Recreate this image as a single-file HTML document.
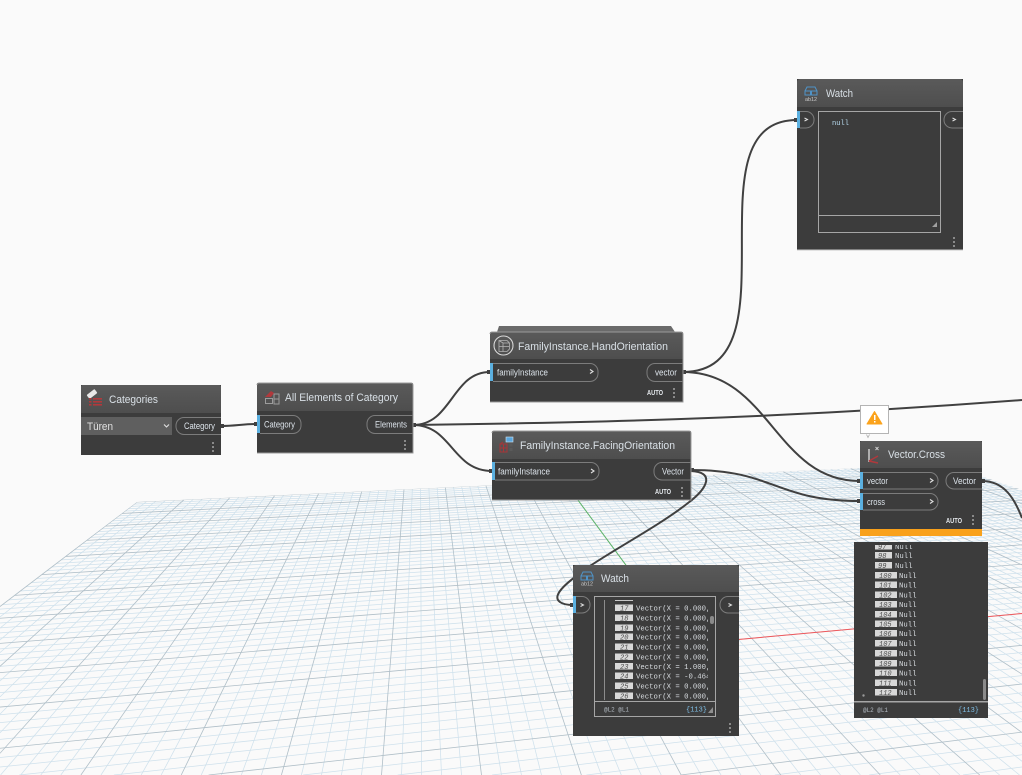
<!DOCTYPE html>
<html>
<head>
<meta charset="utf-8">
<title>Dynamo graph</title>
<style>
html,body{margin:0;padding:0;background:#fafafa;width:1022px;height:775px;overflow:hidden}
svg{display:block}
text{font-family:"Liberation Sans",sans-serif;fill:#d9e0e6}
.t{font-size:11px}
.p{font-size:9px;fill:#dce3ea}
.a{font-size:7.5px;font-weight:bold;fill:#e4e8ec}
.m{font-family:"Liberation Mono",monospace;font-size:7.3px;fill:#d9dde1}
.l{font-family:"Liberation Mono",monospace;font-size:7px;font-style:italic;fill:#4d4d4d}
.g{font-family:"Liberation Mono",monospace;font-size:6.8px;fill:#b4bcc4}
.b{font-family:"Liberation Mono",monospace;font-size:7.3px;fill:#7fc0e8}
.pill{fill:none;stroke:#7c7c7c;stroke-width:1}
.body{fill:#3c3c3c}
.bar{fill:#5bb0e0}
.hd{fill:url(#hg)}
.w{fill:none;stroke:#404040;stroke-width:2}
.dot{fill:#8a8a8a}
.lb{fill:#d8d8d8}
.box{fill:none;stroke:#a6a6a6;stroke-width:1}
.edge{fill:none;stroke:#9a9a9a;stroke-width:1}
</style>
</head>
<body>
<svg xmlns="http://www.w3.org/2000/svg" width="1022" height="775" viewBox="0 0 1022 775">
<defs>
<linearGradient id="hg" x1="0" y1="0" x2="0" y2="1"><stop offset="0" stop-color="#5a5a5a"/><stop offset="1" stop-color="#4e4e4e"/></linearGradient>
<clipPath id="gc"><path d="M137 502L945 464L1022 490L1022 775L0 775L0 605Z"/></clipPath>
<clipPath id="c1"><rect x="595" y="601" width="113" height="100"/></clipPath>
<clipPath id="c2"><rect x="854" y="545" width="134" height="156"/></clipPath>
</defs>
<rect width="1022" height="775" fill="#fafafa"/>
<g id="grid" clip-path="url(#gc)"></g>

<!-- wires -->
<path class="w" d="M221 426C235 426 243 424 257 424"/>
<path class="w" d="M413 425C452 425 452 372 490 372"/>
<path class="w" d="M413 425C452 425 452 471 492 471"/>
<path class="w" d="M413 425C560 423 760 420 1022 400"/>
<path class="w" d="M683 372C800 372 685 120 797 120"/>
<path class="w" d="M683 372C770 372 775 481 860 481"/>
<path class="w" d="M691 470C775 470 775 501 860 501"/>
<path class="w" d="M691 471C715 472 708 488 688 503C660 525 620 546 590 566C570 580 550 595 560 602C564 605 570 605 573 605"/>
<path class="w" d="M982 481C1005 481 1015 500 1022 518"/>
<g fill="#404040">
<rect x="221" y="424" width="3" height="4"/><rect x="254" y="422" width="3" height="4"/>
<rect x="413" y="423" width="3" height="4"/><rect x="487" y="370" width="3" height="4"/>
<rect x="489" y="469" width="3" height="4"/><rect x="683" y="370" width="3" height="4"/>
<rect x="794" y="118" width="3" height="4"/><rect x="691" y="468" width="3" height="4"/>
<rect x="857" y="479" width="3" height="4"/><rect x="857" y="499" width="3" height="4"/>
<rect x="982" y="479" width="3" height="4"/><rect x="570" y="603" width="3" height="4"/>
</g>

<!-- Categories -->
<rect class="body" x="81" y="385" width="140" height="70"/>
<path class="hd" d="M81 413V387a2 2 0 0 1 2-2H219a2 2 0 0 1 2 2V413Z"/>
<g transform="translate(92 394) rotate(-38)"><rect x="-5" y="-2.5" width="10" height="5" rx="1" fill="#e8e8e8"/></g>
<g fill="#b0393c"><rect x="93" y="398" width="9" height="1.6"/><rect x="93" y="401" width="9" height="1.6"/><rect x="93" y="404" width="9" height="1.6"/><rect x="89" y="398" width="2.5" height="1.6"/><rect x="89" y="401" width="2.5" height="1.6"/><rect x="89" y="404" width="2.5" height="1.6"/></g>
<text class="t" x="109" y="403" textLength="49" lengthAdjust="spacingAndGlyphs">Categories</text>
<rect x="81" y="417" width="91" height="18" fill="#5f5f5f"/>
<text class="t" x="87" y="430" textLength="26" lengthAdjust="spacingAndGlyphs" style="fill:#e2e2e2">Türen</text>
<path d="M164 424.5l2.5 2.5l2.5-2.5" fill="none" stroke="#e0e0e0" stroke-width="1.1"/>
<path class="pill" d="M221 417.5H184a8 8 0 0 0-8 8v1a8 8 0 0 0 8 8H221"/>
<text class="p" x="184" y="429" textLength="31" lengthAdjust="spacingAndGlyphs">Category</text>
<g class="dot"><rect x="212" y="442" width="2" height="2"/><rect x="212" y="446" width="2" height="2"/><rect x="212" y="450" width="2" height="2"/></g>

<!-- All Elements -->
<rect class="body" x="257" y="383" width="156" height="70"/>
<path class="hd" d="M257 411V385a2 2 0 0 1 2-2H411a2 2 0 0 1 2 2V411Z"/>
<path class="edge" d="M257 453H413V385a2 2 0 0 0-2-2H259a2 2 0 0 0-2 2"/>
<path d="M265 397l6-6l3 2l-3 4z" fill="#b0393c"/>
<rect x="265.500" y="398.500" width="7" height="5" fill="none" stroke="#9c9c9c"/>
<rect x="274" y="394" width="5" height="10" fill="none" stroke="#9c9c9c"/>
<line x1="274" y1="399" x2="279" y2="399" stroke="#9c9c9c"/>
<text class="t" x="285" y="401" textLength="113" lengthAdjust="spacingAndGlyphs">All Elements of Category</text>
<rect class="bar" x="257" y="415" width="3" height="18"/>
<path class="pill" d="M260 415.5H293a8 8 0 0 1 8 8v2a8 8 0 0 1-8 8H260"/>
<text class="p" x="264" y="427.5" textLength="31" lengthAdjust="spacingAndGlyphs">Category</text>
<path class="pill" d="M413 415.5H375a8 8 0 0 0-8 8v2a8 8 0 0 0 8 8H413"/>
<text class="p" x="375" y="427.5" textLength="32" lengthAdjust="spacingAndGlyphs">Elements</text>
<g class="dot"><rect x="404" y="440" width="2" height="2"/><rect x="404" y="444" width="2" height="2"/><rect x="404" y="448" width="2" height="2"/></g>

<!-- HandOrientation -->
<path d="M497 332L499 326H671L675 332Z" fill="#6a6a6a"/>
<rect class="body" x="490" y="332" width="193" height="70"/>
<path class="hd" d="M490 359V334a2 2 0 0 1 2-2H681a2 2 0 0 1 2 2V359Z"/>
<path class="edge" d="M490 402H683V334a2 2 0 0 0-2-2H492a2 2 0 0 0-2 2"/>
<circle cx="503.500" cy="345.500" r="9.500" fill="none" stroke="#d8d8d8" stroke-width="1.100"/>
<path d="M499 340.500h8l2.500 2.500v6l-2.500 2.500h-8zM499 340.500l4 2.500v8.500M503 343h6.500M499 346.500h10" fill="none" stroke="#b4b4b4" stroke-width=".8"/>
<text class="t" x="518" y="350" textLength="150" lengthAdjust="spacingAndGlyphs">FamilyInstance.HandOrientation</text>
<rect class="bar" x="490" y="363" width="3" height="18"/>
<path class="pill" d="M493 363.500H590a8 8 0 0 1 8 8v2a8 8 0 0 1-8 8H493"/>
<text class="p" x="497" y="375.500" textLength="51" lengthAdjust="spacingAndGlyphs">familyInstance</text>
<path d="M590 369.500l3 2l-3 2" fill="none" stroke="#e0e0e0" stroke-width="1.100"/>
<path class="pill" d="M683 363.500H655a8 8 0 0 0-8 8v2a8 8 0 0 0 8 8H683"/>
<text class="p" x="655" y="375.500" textLength="22" lengthAdjust="spacingAndGlyphs">vector</text>
<text class="a" x="647" y="395" textLength="16" lengthAdjust="spacingAndGlyphs">AUTO</text>
<g class="dot"><rect x="673" y="388" width="2" height="2"/><rect x="673" y="392" width="2" height="2"/><rect x="673" y="396" width="2" height="2"/></g>

<!-- FacingOrientation -->
<rect class="body" x="492" y="431" width="199" height="69"/>
<path class="hd" d="M492 459V433a2 2 0 0 1 2-2H689a2 2 0 0 1 2 2V459Z"/>
<path class="edge" d="M492 500H691V433a2 2 0 0 0-2-2H494a2 2 0 0 0-2 2"/>
<rect x="506" y="437" width="7" height="5" fill="#5aa5dc" stroke="#cfe3f0" stroke-width=".6"/>
<rect x="509.500" y="443.500" width="3" height="3" fill="#5a5a5a"/><rect x="509.500" y="448" width="3" height="3" fill="#5a5a5a"/>
<path d="M500 444h7v8h-7zM500 448h7M503.500 444v8M503 442l-3 2" fill="none" stroke="#a83538" stroke-width="1"/>
<text class="t" x="520" y="449" textLength="155" lengthAdjust="spacingAndGlyphs">FamilyInstance.FacingOrientation</text>
<rect class="bar" x="492" y="462" width="3" height="18"/>
<path class="pill" d="M495 462.500H591a8 8 0 0 1 8 8v1.500a8 8 0 0 1-8 8H495"/>
<text class="p" x="498" y="474.500" textLength="52" lengthAdjust="spacingAndGlyphs">familyInstance</text>
<path d="M591 469l3 2l-3 2" fill="none" stroke="#e0e0e0" stroke-width="1.100"/>
<path class="pill" d="M691 462.500H662a8 8 0 0 0-8 8v1.500a8 8 0 0 0 8 8H691"/>
<text class="p" x="662" y="474.500" textLength="22" lengthAdjust="spacingAndGlyphs">Vector</text>
<text class="a" x="655" y="494" textLength="16" lengthAdjust="spacingAndGlyphs">AUTO</text>
<g class="dot"><rect x="681" y="487" width="2" height="2"/><rect x="681" y="491" width="2" height="2"/><rect x="681" y="495" width="2" height="2"/></g>

<!-- Watch top -->
<rect class="body" x="797" y="79" width="166" height="171"/>
<path class="hd" d="M797 107V82a3 3 0 0 1 3-3H960a3 3 0 0 1 3 3V107Z"/>
<line x1="797" y1="250" x2="963" y2="250" stroke="#c8c8c8"/>
<g fill="none" stroke="#4f93c7" stroke-width="1">
<path d="M805 91l2-4h8l2 4M805 91h5.500v4h-5.500zM811.500 91h5.500v4h-5.500zM810.500 92h1"/>
</g>
<text x="805" y="101" style="font-size:5.500px;fill:#c8c8c8" textLength="12" lengthAdjust="spacingAndGlyphs">ab12</text>
<text class="t" x="826" y="97" textLength="27" lengthAdjust="spacingAndGlyphs">Watch</text>
<rect class="bar" x="797" y="111" width="3" height="17"/>
<path class="pill" d="M800 111.500H806a8 8 0 0 1 8 8v.5a8 8 0 0 1-8 8H800"/>
<path d="M804.500 118l3 1.500l-3 1.500" fill="none" stroke="#e0e0e0"/>
<path class="pill" d="M963 111.500H952a8 8 0 0 0-8 8v.5a8 8 0 0 0 8 8H963"/>
<path d="M952.500 118l3 1.500l-3 1.500" fill="none" stroke="#e0e0e0"/>
<rect class="box" x="818.500" y="111.500" width="122" height="121"/>
<line x1="818" y1="215.500" x2="941" y2="215.500" stroke="#a6a6a6"/>
<path d="M937 222v5h-5z" fill="#a0a0a0"/>
<text class="b" x="832" y="125" textLength="17" lengthAdjust="spacingAndGlyphs" style="fill:#b8dcf0">null</text>
<g class="dot"><rect x="953" y="237" width="2" height="2"/><rect x="953" y="241" width="2" height="2"/><rect x="953" y="245" width="2" height="2"/></g>

<!-- Warning -->
<rect x="860.500" y="405.500" width="28" height="28" fill="#fff" stroke="#b4b4b4"/>
<path d="M874.500 411.500L882 424H867Z" fill="#fba31c" stroke="#fba31c" stroke-linejoin="round"/>
<rect x="874" y="415" width="1.500" height="5" fill="#fff"/><rect x="874" y="421" width="1.500" height="1.500" fill="#fff"/>
<path d="M866.500 434.500l1.500 3l1.500-3" fill="none" stroke="#aaa" stroke-width=".8"/>

<!-- Vector.Cross -->
<rect class="body" x="860" y="441" width="122" height="95"/>
<path class="hd" d="M860 468V443a2 2 0 0 1 2-2H980a2 2 0 0 1 2 2V468Z"/>
<path d="M869 449v13" stroke="#e0e0e0" stroke-width="1.300" fill="none"/>
<path d="M869 461l9-5M869 461l9 2" stroke="#b0393c" stroke-width="1.500" fill="none"/>
<path d="M875.500 447l3 3M878.500 447l-3 3" stroke="#d0d0d0" stroke-width=".9" fill="none"/>
<text class="t" x="888" y="458" textLength="57" lengthAdjust="spacingAndGlyphs">Vector.Cross</text>
<rect class="bar" x="860" y="472" width="3" height="17"/>
<path class="pill" d="M863 472.500H930a8 8 0 0 1 8 8v.5a8 8 0 0 1-8 8H863"/>
<text class="p" x="867" y="484" textLength="21" lengthAdjust="spacingAndGlyphs">vector</text>
<path d="M930 478.500l3 2l-3 2" fill="none" stroke="#e0e0e0" stroke-width="1.100"/>
<rect class="bar" x="860" y="493" width="3" height="17"/>
<path class="pill" d="M863 493.500H930a8 8 0 0 1 8 8v.5a8 8 0 0 1-8 8H863"/>
<text class="p" x="867" y="505" textLength="18" lengthAdjust="spacingAndGlyphs">cross</text>
<path d="M930 499.500l3 2l-3 2" fill="none" stroke="#e0e0e0" stroke-width="1.100"/>
<path class="pill" d="M982 472.500H954a8 8 0 0 0-8 8v.5a8 8 0 0 0 8 8H982"/>
<text class="p" x="953" y="484" textLength="23" lengthAdjust="spacingAndGlyphs">Vector</text>
<text class="a" x="946" y="523" textLength="16" lengthAdjust="spacingAndGlyphs">AUTO</text>
<g class="dot"><rect x="972" y="515" width="2" height="2"/><rect x="972" y="519" width="2" height="2"/><rect x="972" y="523" width="2" height="2"/></g>
<rect x="860" y="529" width="122" height="7" fill="#f9a11b"/>

<!-- Cross preview -->
<rect class="body" x="854" y="542" width="134" height="176"/>
<g clip-path="url(#c2)">
<rect class="lb" x="875" y="543" width="17" height="6.500"/><text class="l" x="878" y="549">97</text><text class="m" x="895" y="549">Null</text>
<rect class="lb" x="875" y="552" width="17" height="6.500"/><text class="l" x="878" y="558">98</text><text class="m" x="895" y="558">Null</text>
<rect class="lb" x="875" y="562" width="17" height="6.500"/><text class="l" x="878" y="568">99</text><text class="m" x="895" y="568">Null</text>
<rect class="lb" x="875" y="572" width="22" height="6.500"/><text class="l" x="879" y="578">100</text><text class="m" x="899" y="578">Null</text>
<rect class="lb" x="875" y="581.500" width="22" height="6.500"/><text class="l" x="879" y="587.500">101</text><text class="m" x="899" y="587.500">Null</text>
<rect class="lb" x="875" y="591.500" width="22" height="6.500"/><text class="l" x="879" y="597.500">102</text><text class="m" x="899" y="597.500">Null</text>
<rect class="lb" x="875" y="601" width="22" height="6.500"/><text class="l" x="879" y="607">103</text><text class="m" x="899" y="607">Null</text>
<rect class="lb" x="875" y="611" width="22" height="6.500"/><text class="l" x="879" y="617">104</text><text class="m" x="899" y="617">Null</text>
<rect class="lb" x="875" y="620.500" width="22" height="6.500"/><text class="l" x="879" y="626.500">105</text><text class="m" x="899" y="626.500">Null</text>
<rect class="lb" x="875" y="630" width="22" height="6.500"/><text class="l" x="879" y="636">106</text><text class="m" x="899" y="636">Null</text>
<rect class="lb" x="875" y="640" width="22" height="6.500"/><text class="l" x="879" y="646">107</text><text class="m" x="899" y="646">Null</text>
<rect class="lb" x="875" y="650" width="22" height="6.500"/><text class="l" x="879" y="656">108</text><text class="m" x="899" y="656">Null</text>
<rect class="lb" x="875" y="660" width="22" height="6.500"/><text class="l" x="879" y="666">109</text><text class="m" x="899" y="666">Null</text>
<rect class="lb" x="875" y="669.500" width="22" height="6.500"/><text class="l" x="879" y="675.500">110</text><text class="m" x="899" y="675.500">Null</text>
<rect class="lb" x="875" y="679.500" width="22" height="6.500"/><text class="l" x="879" y="685.500">111</text><text class="m" x="899" y="685.500">Null</text>
<rect class="lb" x="875" y="689" width="22" height="6.500"/><text class="l" x="879" y="695">112</text><text class="m" x="899" y="695">Null</text>
</g>
<rect x="983" y="679" width="3" height="21" rx="1.500" fill="#8a8a8a"/>
<circle cx="863.500" cy="695.500" r="1.200" fill="#9a9a9a"/>
<rect x="854" y="701" width="134" height="1.500" fill="#a6a6a6"/>
<text class="g" x="863" y="712" textLength="25" lengthAdjust="spacingAndGlyphs">@L2 @L1</text>
<text class="b" x="958" y="712" textLength="21" lengthAdjust="spacingAndGlyphs">{113}</text>

<!-- Watch bottom -->
<rect class="body" x="573" y="565" width="166" height="171"/>
<path class="hd" d="M573 592V568a3 3 0 0 1 3-3H736a3 3 0 0 1 3 3V592Z"/>
<g fill="none" stroke="#4f93c7" stroke-width="1">
<path d="M581 576l2-4h8l2 4M581 576h5.500v4h-5.500zM587.500 576h5.500v4h-5.500zM586.500 577h1"/>
</g>
<text x="581" y="585.500" style="font-size:5.500px;fill:#c8c8c8" textLength="12" lengthAdjust="spacingAndGlyphs">ab12</text>
<text class="t" x="601" y="582" textLength="28" lengthAdjust="spacingAndGlyphs">Watch</text>
<rect class="bar" x="573" y="596" width="3" height="17"/>
<path class="pill" d="M576 596.500H582a8 8 0 0 1 8 8v.5a8 8 0 0 1-8 8H576"/>
<path d="M580.500 603.500l3 1.500l-3 1.500" fill="none" stroke="#e0e0e0"/>
<path class="pill" d="M739 596.500H728a8 8 0 0 0-8 8v.5a8 8 0 0 0 8 8H739"/>
<path d="M728.500 603.500l3 1.500l-3 1.500" fill="none" stroke="#e0e0e0"/>
<rect class="box" x="594.500" y="596.500" width="121" height="120"/>
<line x1="594" y1="701.500" x2="716" y2="701.500" stroke="#a6a6a6"/>
<line x1="604.500" y1="600" x2="604.500" y2="700" stroke="#8c8c8c"/>
<line x1="615" y1="600.500" x2="633" y2="600.500" stroke="#c8c8c8"/>
<g clip-path="url(#c1)">
<rect class="lb" x="615" y="604.500" width="18" height="6.500"/><text class="l" x="620" y="610.500">17</text><text class="m" x="636" y="610.500">Vector(X = 0.000,</text>
<rect class="lb" x="615" y="614.500" width="18" height="6.500"/><text class="l" x="620" y="620.500">18</text><text class="m" x="636" y="620.500">Vector(X = 0.000,</text>
<rect class="lb" x="615" y="624.500" width="18" height="6.500"/><text class="l" x="620" y="630.500">19</text><text class="m" x="636" y="630.500">Vector(X = 0.000,</text>
<rect class="lb" x="615" y="633.500" width="18" height="6.500"/><text class="l" x="620" y="639.500">20</text><text class="m" x="636" y="639.500">Vector(X = 0.000,</text>
<rect class="lb" x="615" y="643.500" width="18" height="6.500"/><text class="l" x="620" y="649.500">21</text><text class="m" x="636" y="649.500">Vector(X = 0.000,</text>
<rect class="lb" x="615" y="653.500" width="18" height="6.500"/><text class="l" x="620" y="659.500">22</text><text class="m" x="636" y="659.500">Vector(X = 0.000,</text>
<rect class="lb" x="615" y="663" width="18" height="6.500"/><text class="l" x="620" y="669">23</text><text class="m" x="636" y="669">Vector(X = 1.000,</text>
<rect class="lb" x="615" y="672.500" width="18" height="6.500"/><text class="l" x="620" y="678.500">24</text><text class="m" x="636" y="678.500">Vector(X = -0.464</text>
<rect class="lb" x="615" y="682.500" width="18" height="6.500"/><text class="l" x="620" y="688.500">25</text><text class="m" x="636" y="688.500">Vector(X = 0.000,</text>
<rect class="lb" x="615" y="692.500" width="18" height="6.500"/><text class="l" x="620" y="698.500">26</text><text class="m" x="636" y="698.500">Vector(X = 0.000,</text>
</g>
<rect x="710" y="616" width="4" height="8" rx="2" fill="#8a8a8a"/>
<text class="g" x="604" y="711.500" textLength="25" lengthAdjust="spacingAndGlyphs">@L2 @L1</text>
<text class="b" x="686" y="711.500" textLength="21" lengthAdjust="spacingAndGlyphs">{113}</text>
<path d="M713 707v6h-5z" fill="#8f8f8f"/>
<g class="dot"><rect x="729" y="723" width="2" height="2"/><rect x="729" y="727" width="2" height="2"/><rect x="729" y="731" width="2" height="2"/></g>
</svg>
<script>
(function(){
var g=document.getElementById('grid'),NS='http://www.w3.org/2000/svg';
var VA=[420,286],VB=[4500,295];
function line(x1,y1,x2,y2,c,w){
  var t0=0,t1=1,dx=x2-x1,dy=y2-y1,ps=[-dx,dx,-dy,dy],qs=[x1,1022-x1,y1,775-y1];
  for(var n=0;n < 4;n++){var p=ps[n],q=qs[n];
    if(p===0){if(q < 0)return;}
    else{var r=q/p;if(p < 0){if(r > t1)return;if(r > t0)t0=r;}else{if(r < t0)return;if(r < t1)t1=r;}}
  }
  var l=document.createElementNS(NS,'line');
  l.setAttribute('x1',x1+t0*dx);l.setAttribute('y1',y1+t0*dy);
  l.setAttribute('x2',x1+t1*dx);l.setAttribute('y2',y1+t1*dy);
  l.setAttribute('stroke',c);l.setAttribute('stroke-width',w);g.appendChild(l);
}
function A(k){var s=.0002292+k*.00000249;var x=4500-1/s;var y=502-.047*(x-137);return [x,y,VA[0]+(x-VA[0])*(800-VA[1])/(y-VA[1]),800];}
function B(j){var w=.00463-.000233*j;var y=VA[1]+1/w;var x=VA[0]+(137-VA[0])*(y-VA[1])/216;var m=(y-VB[1])/(VB[0]-x);return [x,y,1100,y-m*(1100-x)];}
var minor='#cfe1ec',major='#b0bfc8',i,a,b;
for(i=0;i <= 105;i++){if(i%5){a=A(i/5);line(a[0],a[1],a[2],a[3],minor,.75);}}
for(i=0;i <= 75;i++){if(i%5){b=B(i/5);line(b[0],b[1],b[2],b[3],minor,.75);}}
for(i=0;i <= 21;i++){a=A(i);line(a[0],a[1],a[2],a[3],major,.8);}
for(i=0;i <= 15;i++){b=B(i);line(b[0],b[1],b[2],b[3],major,.8);}
var a0=A(10),b0=B(10);
var cy=645,cx=VA[0]+(a0[0]-VA[0])*(cy-VA[1])/(a0[1]-VA[1]);
line(a0[0],a0[1],cx,cy,'#5fb56a',1);
var my=(b0[1]-VB[1])/(VB[0]-b0[0]);
line(cx,b0[1]-my*(cx-b0[0]),1100,b0[3],'#f0585c',1);
})();
</script>
</body>
</html>
